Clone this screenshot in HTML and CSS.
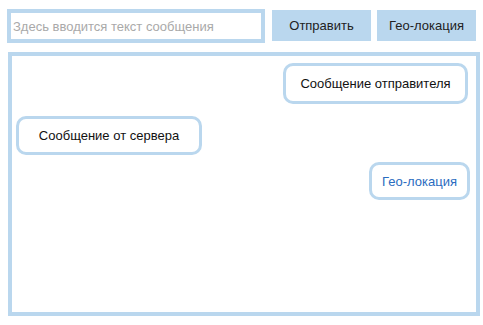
FILE: index.html
```html
<!DOCTYPE html>
<html lang="ru">
<head>
<meta charset="utf-8">
<link rel="stylesheet" href="styles.css">
</head>
<body>
<div class="app">
  <div class="toolbar">
    <input class="msg-input" type="text" placeholder="Здесь вводится текст сообщения">
    <button class="btn">Отправить</button>
    <button class="btn">Гео-локация</button>
  </div>
  <div class="chat">
    <div class="bubble bubble-sender">Сообщение отправителя</div>
    <div class="bubble bubble-server">Сообщение от сервера</div>
    <a class="bubble bubble-geo" href="#">Гео-локация</a>
  </div>
</div>
</body>
</html>
```
FILE: styles.css
```css
* { box-sizing: border-box; }
html, body { margin: 0; background: #fff; }
body { font-family: "Liberation Sans", Arial, sans-serif; font-size: 13px; color: #111; }
.app { padding: 9px 0 0 7px; }
.toolbar { display: flex; align-items: flex-start; gap: 6px; }
.msg-input {
  width: 258px; height: 34px; margin: 0 1px 0 0;
  border: 4px solid #bad7ee; outline: none;
  padding: 0 0 0 2px;
  font-family: inherit; font-size: 13px; color: #111;
}
.msg-input::placeholder { color: #a9a9a9; }
.btn {
  width: 99px; height: 31px; margin-top: 1px;
  background: #bad7ee; border: none; padding: 0;
  font-family: inherit; font-size: 13px; color: #222;
}
.chat {
  margin: 9px 0 0 1px;
  width: 472px; height: 264px;
  border: 4px solid #bad7ee;
  display: flex; flex-direction: column; align-items: flex-start;
  padding-top: 7px;
}
.bubble {
  display: flex; align-items: center; justify-content: center;
  border: 3px solid #bad7ee; border-radius: 10px;
  background: #fff; color: #111; text-decoration: none;
}
.bubble-sender { align-self: flex-end; margin-right: 8px; width: 185px; height: 41px; }
.bubble-server { margin: 12px 0 0 4px; width: 186px; height: 39px; }
.bubble-geo { align-self: flex-end; margin: 7px 6px 0 0; width: 101px; height: 38px; color: #2a6cc0; }
```
